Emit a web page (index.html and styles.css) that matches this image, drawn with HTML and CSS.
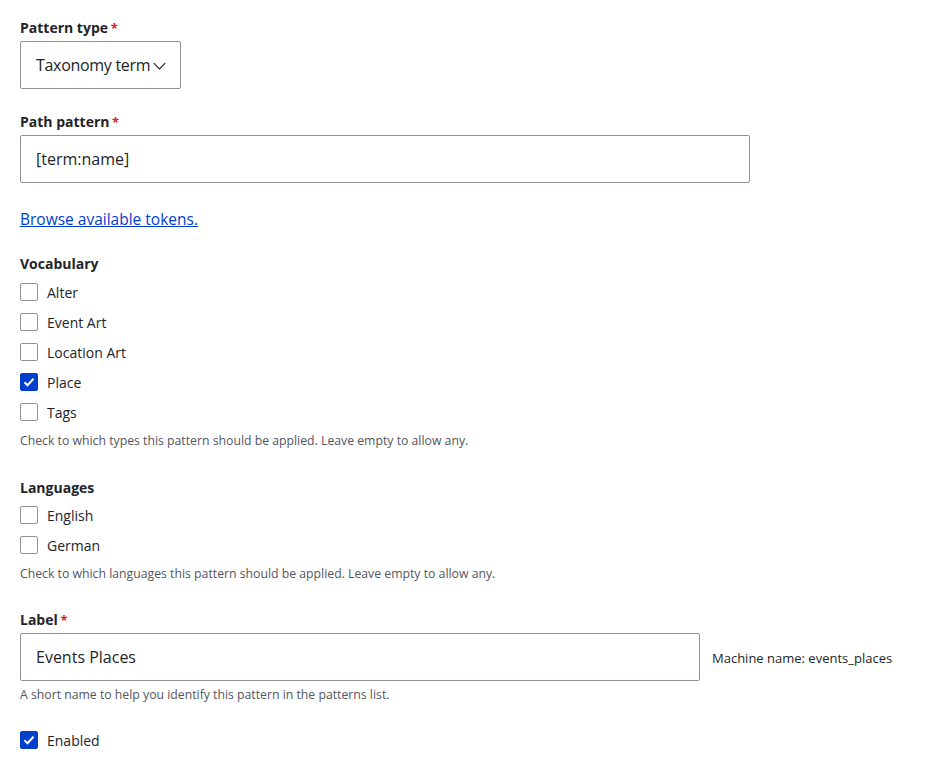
FILE: index.html
```html
<!DOCTYPE html>
<html lang="en">
<head>
    <meta charset="UTF-8">
    <meta name="viewport" content="width=device-width, initial-scale=1.0">
    <link rel="stylesheet" href="styles.css">
</head>
<body>
    <form class="pattern-form">
        <div class="form-item">
            <label class="form-label">Pattern type <span class="required">*</span></label>
            <div class="form-select">
                <span>Taxonomy term</span>
                <svg class="select-arrow" width="13" height="8" viewBox="0 0 13 8">
                    <path d="M0.8 1.2l5.7 5.7 5.7-5.7" fill="none" stroke="#232429" stroke-width="1.2"/>
                </svg>
            </div>
        </div>

        <div class="form-item">
            <label class="form-label">Path pattern <span class="required">*</span></label>
            <div class="form-text form-text--wide">[term:name]</div>
        </div>

        <p class="token-link"><a href="#">Browse available tokens.</a></p>

        <fieldset class="form-checkboxes">
            <legend class="form-label">Vocabulary</legend>
            <label class="checkbox"><span class="checkbox-box"></span>Alter</label>
            <label class="checkbox"><span class="checkbox-box"></span>Event Art</label>
            <label class="checkbox"><span class="checkbox-box"></span>Location Art</label>
            <label class="checkbox"><span class="checkbox-box is-checked"><svg width="12" height="10" viewBox="0 0 12 10"><path d="M1.5 5.2l3 3 6-6.4" fill="none" stroke="#fff" stroke-width="2"/></svg></span>Place</label>
            <label class="checkbox"><span class="checkbox-box"></span>Tags</label>
            <div class="description">Check to which types this pattern should be applied. Leave empty to allow any.</div>
        </fieldset>

        <fieldset class="form-checkboxes form-checkboxes--last">
            <legend class="form-label">Languages</legend>
            <label class="checkbox"><span class="checkbox-box"></span>English</label>
            <label class="checkbox"><span class="checkbox-box"></span>German</label>
            <div class="description">Check to which languages this pattern should be applied. Leave empty to allow any.</div>
        </fieldset>

        <div class="form-item form-item--label">
            <label class="form-label">Label <span class="required">*</span></label>
            <div class="machine-row">
                <div class="form-text form-text--label">Events Places</div>
                <span class="machine-name">Machine name: events_places</span>
            </div>
            <div class="description description--input">A short name to help you identify this pattern in the patterns list.</div>
        </div>

        <label class="checkbox checkbox--enabled"><span class="checkbox-box is-checked"><svg width="12" height="10" viewBox="0 0 12 10"><path d="M1.5 5.2l3 3 6-6.4" fill="none" stroke="#fff" stroke-width="2"/></svg></span>Enabled</label>
    </form>
</body>
</html>
```

FILE: styles.css
```css
/* Base */
:root {
    --text: #232429;
    --text-light: #545560;
    --border: #8e929c;
    --accent: #003ecc;
    --required: #dc2323;
}

body {
    margin: 0;
    padding: 19px 20px 0;
    font-family: 'Open Sans', 'Noto Sans', sans-serif;
    color: var(--text);
    background: #fff;
}

.pattern-form {
    display: flex;
    flex-direction: column;
}

/* Labels */
.form-label {
    display: block;
    font-size: 14px;
    font-weight: 700;
    line-height: 18px;
    margin: 0 0 4px;
    padding: 0;
}

.required {
    color: var(--required);
    font-size: 13px;
    margin-left: -1px;
}

.form-item {
    margin-bottom: 24px;
}

/* Inputs */
.form-select,
.form-text {
    box-sizing: border-box;
    height: 48px;
    border: 1px solid var(--border);
    border-radius: 2px;
    font-size: 16px;
    display: flex;
    align-items: center;
    padding: 0 15px;
    background: #fff;
    white-space: nowrap;
}

.form-select {
    width: 161px;
    padding-right: 10px;
    gap: 3px;
    letter-spacing: -0.3px;
}

.select-arrow {
    flex-shrink: 0;
    margin-top: 1px;
}

.form-text--wide {
    width: 730px;
}

.form-text--label {
    width: 680px;
}

.token-link {
    margin: 0 0 24px;
    font-size: 15.5px;
    line-height: 24px;
}

.token-link a {
    color: var(--accent);
}

/* Checkboxes */
.form-checkboxes {
    border: 0;
    margin: 0 0 29px;
    padding: 0;
    min-width: 0;
}

.form-checkboxes--last {
    margin-bottom: 28px;
}

.form-checkboxes--last .form-label {
    margin-bottom: 3px;
}

.checkbox {
    display: flex;
    align-items: center;
    height: 30px;
    font-size: 14px;
}

.checkbox-box {
    box-sizing: border-box;
    width: 18px;
    height: 18px;
    border: 1px solid var(--border);
    border-radius: 2px;
    margin-right: 9px;
    display: flex;
    align-items: center;
    justify-content: center;
}

.checkbox-box.is-checked {
    background: var(--accent);
    border-color: var(--accent);
}

.description {
    font-size: 12.25px;
    line-height: 18px;
    color: var(--text-light);
    margin-top: 5px;
}

.form-item--label {
    margin-bottom: 21px;
}

.machine-row {
    display: flex;
    align-items: center;
}

.machine-name {
    font-size: 13px;
    margin-left: 12px;
    margin-top: 2px;
}
```
